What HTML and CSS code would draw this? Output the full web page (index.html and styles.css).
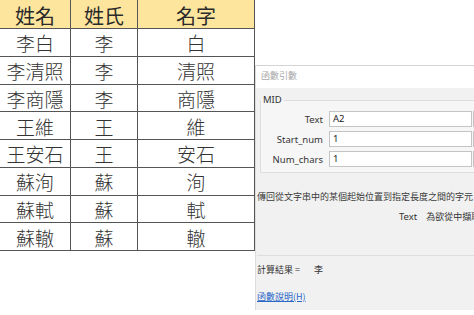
FILE: index.html
```html
<!DOCTYPE html>
<html lang="zh-Hant">
<head>
<meta charset="utf-8">
<title>MID</title>
<link rel="stylesheet" href="styles.css">
</head>
<body>
<div class="screen">
  <div class="sheet">
    <div class="cell head">姓名</div><div class="cell head">姓氏</div><div class="cell head">名字</div>
    <div class="cell">李白</div><div class="cell">李</div><div class="cell">白</div>
    <div class="cell">李清照</div><div class="cell">李</div><div class="cell">清照</div>
    <div class="cell">李商隱</div><div class="cell">李</div><div class="cell">商隱</div>
    <div class="cell">王維</div><div class="cell">王</div><div class="cell">維</div>
    <div class="cell">王安石</div><div class="cell">王</div><div class="cell">安石</div>
    <div class="cell">蘇洵</div><div class="cell">蘇</div><div class="cell">洵</div>
    <div class="cell">蘇軾</div><div class="cell">蘇</div><div class="cell">軾</div>
    <div class="cell">蘇轍</div><div class="cell">蘇</div><div class="cell">轍</div>
  </div>
  <div class="side">
    <div class="dialog">
      <div class="dlg-title">函數引數</div>
      <div class="dlg-body">
        <fieldset class="group">
          <legend class="legend">MID</legend>
          <div class="args">
            <div class="arg"><span class="arg-label">Text</span><span class="arg-input">A2</span><span class="arg-ref"></span></div>
            <div class="arg"><span class="arg-label">Start_num</span><span class="arg-input">1</span><span class="arg-ref"></span></div>
            <div class="arg"><span class="arg-label">Num_chars</span><span class="arg-input">1</span><span class="arg-ref"></span></div>
          </div>
        </fieldset>
        <p class="desc">傳回從文字串中的某個起始位置到指定長度之間的字元</p>
        <div class="argdesc"><span class="argdesc-name">Text</span><span class="argdesc-text">為欲從中擷取</span></div>
        <div class="sep"></div>
        <div class="result"><span>計算結果 =</span><span class="result-val">李</span></div>
        <a class="help" href="#">函數說明(H)</a>
      </div>
    </div>
  </div>
</div>
</body>
</html>
```

FILE: styles.css
```css
html, body {
  margin: 0;
  padding: 0;
  background: #ffffff;
}

.screen {
  width: 474px;
  height: 315px;
  overflow: hidden;
  display: flex;
  background: #ffffff;
}

.sheet {
  flex: none;
  width: 255px;
  display: grid;
  grid-template-columns: 71px 67px 117px;
  grid-template-rows: 29px repeat(8, 27.75px);
  align-self: flex-start;
}

.cell {
  box-sizing: border-box;
  border-right: 1px solid #555555;
  border-bottom: 1px solid #555555;
  display: flex;
  align-items: center;
  justify-content: center;
  font-family: "Noto Sans CJK TC", "Noto Sans CJK SC", sans-serif;
  font-weight: 300;
  font-size: 19px;
  line-height: 1;
  color: #333333;
  padding-top: 1px;
  white-space: nowrap;
}

.head {
  background: #fde59d;
  font-weight: 400;
  font-size: 20px;
  color: #2a2a2a;
  padding-top: 3px;
}

.side {
  flex: 1;
  min-width: 0;
  display: flex;
  flex-direction: column;
  padding-top: 65px;
}

.dialog {
  height: 245px;
  box-sizing: border-box;
  border-top: 1px solid #d4d4d4;
  border-left: 1px solid #dcdcdc;
  background: #f1f1f1;
  display: flex;
  flex-direction: column;
  overflow: hidden;
  font-family: "Noto Sans", "Noto Sans CJK TC", sans-serif;
  color: #333333;
}

.dlg-title {
  height: 22px;
  flex: none;
  background: #ffffff;
  padding-left: 5px;
  font-family: "Noto Sans CJK TC", sans-serif;
  font-size: 9px;
  line-height: 20px;
  color: #a9a9a9;
}

.dlg-body {
  flex: 1;
  display: flex;
  flex-direction: column;
  padding-left: 1px;
}

.group {
  margin: 6px 0 0 3px;
  padding: 5px 0 5px 0;
  border: 1px solid #dddddd;
  border-right: none;
  background: #f6f6f6;
  min-width: 0;
  width: 260px;
}

.legend {
  padding: 0 2px;
  font-size: 9.5px;
  line-height: 12px;
  color: #333333;
}

.args {
  display: flex;
  flex-direction: column;
  gap: 4px;
}

.arg {
  display: flex;
  align-items: center;
  height: 16px;
  gap: 6px;
}

.arg-label {
  width: 62px;
  text-align: right;
  font-size: 9.5px;
  color: #333333;
  flex: none;
}

.arg-input {
  flex: none;
  width: 143px;
  height: 16px;
  box-sizing: border-box;
  border: 1px solid #c4c4c4;
  background: #ffffff;
  font-size: 9.5px;
  line-height: 14px;
  padding-left: 3px;
  color: #222222;
}

.arg-ref {
  flex: none;
  width: 14px;
  height: 16px;
  box-sizing: border-box;
  border: 1px solid #c4c4c4;
  background: #f8f8f8;
  margin-left: -5px;
}

.desc {
  margin: 18px 0 0 0;
  font-family: "Noto Sans CJK TC", sans-serif;
  font-size: 9px;
  line-height: 12px;
  color: #3a3a3a;
  white-space: nowrap;
}

.argdesc {
  margin-top: 8px;
  display: flex;
  gap: 9px;
  padding-left: 142px;
  font-size: 9.5px;
  line-height: 12px;
  white-space: nowrap;
  color: #333333;
}

.argdesc-text {
  font-family: "Noto Sans CJK TC", sans-serif;
  font-size: 9px;
}

.sep {
  margin-top: 32px;
  height: 1px;
  background: #dedede;
}

.result {
  margin-top: 8px;
  display: flex;
  gap: 14px;
  font-family: "Noto Sans CJK TC", sans-serif;
  font-size: 9px;
  line-height: 12px;
  color: #333333;
}

.help {
  margin-top: 15px;
  align-self: flex-start;
  font-family: "Noto Sans CJK TC", sans-serif;
  font-size: 9px;
  line-height: 12px;
  color: #2a68c8;
  text-decoration: underline;
}
```
